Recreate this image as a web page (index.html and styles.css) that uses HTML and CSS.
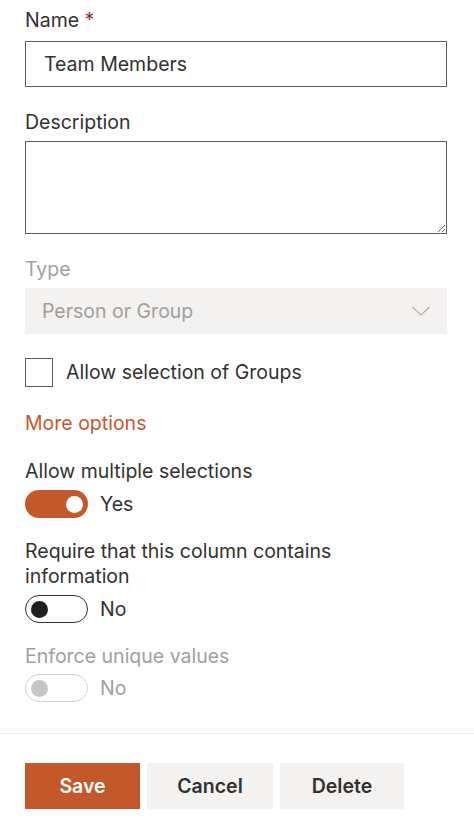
FILE: index.html
```html
<!DOCTYPE html>
<html lang="en">
<head>
<meta charset="utf-8">
<title>Edit column</title>
<link rel="stylesheet" href="styles.css">
</head>
<body>
<div class="panel">
  <div class="form">
    <label class="label label-name">Name <span class="req">*</span></label>
    <input class="text-input" type="text" value="Team Members">

    <label class="label label-gap">Description</label>
    <textarea class="text-area"></textarea>

    <div class="label label-gap disabled">Type</div>
    <div class="select">
      <span>Person or Group</span>
      <svg class="chev" width="20" height="12" viewBox="0 0 20 12"><path d="M1.5 2 L10 10 L18.5 2" fill="none" stroke="#b3b0ad" stroke-width="1.2"/></svg>
    </div>

    <div class="check-row">
      <span class="checkbox"></span>
      <span class="check-text">Allow selection of Groups</span>
    </div>

    <a class="more">More options</a>

    <div class="label label-gap">Allow multiple selections</div>
    <div class="toggle-row">
      <span class="toggle on"><span class="knob"></span></span>
      <span class="toggle-text">Yes</span>
    </div>

    <div class="label label-gap2 label-wrap">Require that this column contains information</div>
    <div class="toggle-row">
      <span class="toggle off"><span class="knob"></span></span>
      <span class="toggle-text">No</span>
    </div>

    <div class="label label-gap2 label-last disabled">Enforce unique values</div>
    <div class="toggle-row">
      <span class="toggle dis"><span class="knob"></span></span>
      <span class="toggle-text disabled">No</span>
    </div>
  </div>

  <div class="divider"></div>

  <div class="actions">
    <button class="btn primary save">Save</button>
    <button class="btn cancel">Cancel</button>
    <button class="btn delete">Delete</button>
  </div>
</div>
</body>
</html>
```

FILE: styles.css
```css
* { box-sizing: border-box; }
html, body {
  margin: 0;
  padding: 0;
  background: #ffffff;
}
body {
  font-family: "Inter", "Roboto", "Liberation Sans", sans-serif;
  color: #323130;
  font-size: 19.5px;
  -webkit-font-smoothing: antialiased;
}
.panel {
  width: 474px;
  height: 825px;
  overflow: hidden;
}
.form {
  padding: 8px 27px 0 25px;
  display: flex;
  flex-direction: column;
  align-items: stretch;
}
.label {
  display: block;
  font-size: 19.5px;
  line-height: 25px;
  color: #323130;
}
.label-name { margin-bottom: 8px; }
.label-gap { margin-top: 23px; margin-bottom: 6px; }
.label-gap2 { margin-top: 21px; margin-bottom: 6px; }
.label-last { margin-bottom: 5px; }
.label-wrap { max-width: 340px; }
.disabled { color: #a19f9d; }
.req { color: #a4262c; }

.text-input {
  height: 46px;
  width: 100%;
  border: 1px solid #605e5c;
  border-radius: 0;
  padding: 0 18px;
  font: inherit;
  font-size: 19.5px;
  color: #323130;
  outline: none;
}
.text-area {
  height: 93px;
  width: 100%;
  border: 1px solid #605e5c;
  border-radius: 0;
  font: inherit;
  resize: vertical;
  outline: none;
  display: block;
}
.select {
  height: 46px;
  background: #f3f2f1;
  display: flex;
  align-items: center;
  justify-content: space-between;
  padding: 0 16px 0 17px;
  color: #a19f9d;
  font-size: 19.5px;
}
.chev { display: block; }

.check-row {
  margin-top: 24px;
  display: flex;
  align-items: center;
  gap: 13px;
}
.checkbox {
  width: 28px;
  height: 29px;
  border: 1px solid #605e5c;
  background: #fff;
}
.check-text { font-size: 19.5px; line-height: 25px; }

.more {
  margin-top: 24px;
  font-size: 19.5px;
  line-height: 25px;
  color: #c3592b;
  text-decoration: none;
}

.toggle-row {
  display: flex;
  align-items: center;
  gap: 12px;
  height: 28px;
}
.toggle {
  width: 63px;
  height: 28px;
  border-radius: 14px;
  display: flex;
  align-items: center;
  padding: 0 5px;
  flex: none;
}
.toggle .knob {
  width: 17px;
  height: 17px;
  border-radius: 50%;
}
.toggle.on {
  background: #c3592b;
  justify-content: flex-end;
}
.toggle.on .knob { background: #ffffff; }
.toggle.off {
  border: 1.5px solid #323130;
  justify-content: flex-start;
}
.toggle.off .knob { background: #201f1e; }
.toggle.dis {
  border: 1.5px solid #d2d0ce;
  justify-content: flex-start;
}
.toggle.dis .knob { background: #c8c6c4; }
.toggle-text { font-size: 19.5px; line-height: 25px; }

.divider {
  margin-top: 31px;
  height: 1px;
  background: #edebe9;
}
.actions {
  margin-top: 29px;
  padding: 0 25px;
  display: flex;
  gap: 7px;
}
.btn {
  height: 46px;
  border: none;
  border-radius: 0;
  font-family: inherit;
  font-size: 19.5px;
  font-weight: 600;
  background: #f3f2f1;
  color: #323130;
  padding: 0;
}
.save { width: 115px; background: #c3592b; color: #ffffff; }
.cancel { width: 126px; }
.delete { width: 124px; }
```
